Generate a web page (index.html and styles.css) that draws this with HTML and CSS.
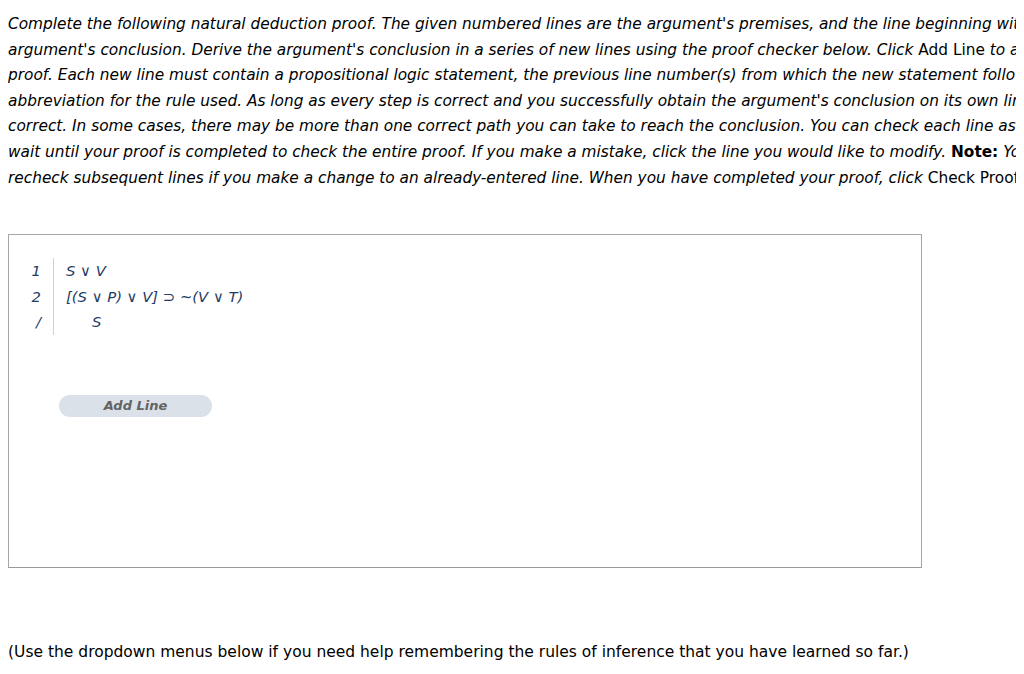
FILE: index.html
```html
<!DOCTYPE html>
<html lang="en">
<head>
  <meta charset="UTF-8">
  <title>Natural Deduction Proof</title>
  <link rel="stylesheet" href="styles.css">
</head>
<body>

<div class="instructions">
  <div class="line">Complete the following natural deduction proof. The given numbered lines are the argument's premises, and the line beginning with / is the</div>
  <div class="line">argument's conclusion. Derive the argument's conclusion in a series of new lines using the proof checker below. Click <span class="plain">Add Line</span> to add a new line to the</div>
  <div class="line">proof. Each new line must contain a propositional logic statement, the previous line number(s) from which the new statement follows, and the</div>
  <div class="line">abbreviation for the rule used. As long as every step is correct and you successfully obtain the argument's conclusion on its own line, your proof is</div>
  <div class="line">correct. In some cases, there may be more than one correct path you can take to reach the conclusion. You can check each line as you go, or</div>
  <div class="line">wait until your proof is completed to check the entire proof. If you make a mistake, click the line you would like to modify. <b class="plain">Note:</b> You will need to</div>
  <div class="line">recheck subsequent lines if you make a change to an already-entered line. When you have completed your proof, click <span class="plain">Check Proof</span>.</div>
</div>

<div class="proof-box">
  <div class="proof">
    <div class="nums">
      <div>1</div>
      <div>2</div>
      <div>/</div>
    </div>
    <div class="stmts">
      <div>S <span class="op">&#8744;</span> V</div>
      <div>[(S <span class="op">&#8744;</span> P) <span class="op">&#8744;</span> V] <span class="op">&#8835;</span> <span class="op">~</span>(V <span class="op">&#8744;</span> T)</div>
      <div class="concl">S</div>
    </div>
  </div>
  <button class="add-line">Add Line</button>
</div>

<p class="hint">(Use the dropdown menus below if you need help remembering the rules of inference that you have learned so far.)</p>

</body>
</html>
```

FILE: styles.css
```css
html {
  overflow: hidden;
}

body {
  font-family: "DejaVu Sans", Verdana, sans-serif;
  font-size: 15.5px;
  color: #000;
  background: #fff;
  margin: 8px;
}

.instructions {
  font-style: italic;
  font-size: 15.35px;
  line-height: 25.6px;
  padding-top: 4px;
  white-space: nowrap;
}

.instructions .plain {
  font-style: normal;
}

.proof-box {
  margin-top: 43px;
  width: 912px;
  height: 332px;
  border: 1px solid #a6a6a6;
  border-bottom-color: #999;
  box-sizing: content-box;
}

.proof {
  display: flex;
  margin: 23px 0 0 0;
  color: #1f3c66;
  font-style: italic;
  font-size: 14.8px;
  line-height: 25.6px;
}

.proof .op {
  font-style: normal;
}

.nums {
  width: 45px;
  text-align: right;
  padding-right: 12px;
  box-sizing: border-box;
  border-right: 1px solid #d0d0d0;
}

.stmts {
  padding-left: 12px;
}

.concl {
  padding-left: 26px;
}

.add-line {
  display: block;
  margin: 60px 0 0 50px;
  width: 153px;
  height: 22px;
  border: none;
  border-radius: 11px;
  background: #dbe1e9;
  color: #636363;
  font-family: "DejaVu Sans", Verdana, sans-serif;
  font-size: 13px;
  font-weight: bold;
  font-style: italic;
  padding: 0;
  cursor: pointer;
}

.hint {
  margin: 74px 0 0 0;
  line-height: 20px;
}
```
